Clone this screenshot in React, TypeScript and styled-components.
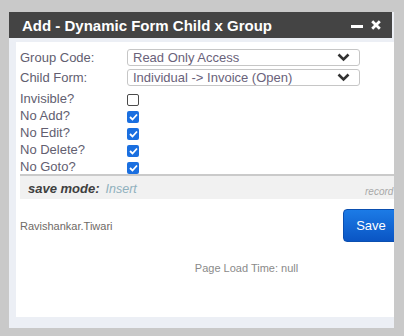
import React from 'react';
import styled, { createGlobalStyle } from 'styled-components';

const GlobalStyle = createGlobalStyle`
    html, body {
        margin:0;
        padding:0;
        background:#c9c9c9;
    }
    body{
        font-family:"Liberation Sans", Arial, sans-serif;
    }
`;

const Page = styled.div`
    width:404px;
    height:336px;
    padding:12px 10px 0 9px;
    box-sizing:border-box;
    overflow:hidden;
`;

const Window = styled.div`
    width:385px;
    height:316px;
    background:#eceff5;
    overflow:hidden;
    display:flex;
    flex-direction:column;
`;

const TitleBar = styled.div`
    height:26px;
    margin-right:2px;
    background:#444444;
    display:flex;
    align-items:center;
    padding:0 11px 0 13px;
    flex-shrink:0;
    h3{
        margin:0;
        flex:1;
        font-size:15px;
        font-weight:bold;
        color:#ffffff;
        white-space:nowrap;
    }
`;

const TitleIcons = styled.div`
    display:flex;
    align-items:center;
    gap:8px;
`;

const Body = styled.div`
    flex:1;
    padding:4px 0 11px 7px;
    display:flex;
`;

const Panel = styled.div`
    width:457px;
    flex-shrink:0;
    background:#ffffff;
    padding:5px 0 0 4px;
    box-sizing:border-box;
    display:flex;
    flex-direction:column;
`;

const SelectRow = styled.div`
    height:20px;
    display:flex;
    align-items:center;
`;

const Label = styled.div`
    width:107px;
    flex-shrink:0;
    font-size:13px;
    color:#625e70;
`;

const FakeSelect = styled.div`
    width:233px;
    height:17px;
    box-sizing:border-box;
    border:1px solid #c6c6c6;
    border-radius:3px;
    display:flex;
    align-items:center;
    justify-content:space-between;
    padding:0 9px 0 5px;
    font-size:13px;
    color:#6a627a;
    white-space:nowrap;
`;

const Checks = styled.div`
    margin-top:3px;
`;

const CheckRow = styled.div`
    height:17px;
    display:flex;
    align-items:center;
`;

const Box = styled.span<{ $on: boolean }>`
    width:12px;
    height:12px;
    margin-top:3px;
    box-sizing:border-box;
    border-radius:2px;
    border:${p => p.$on ? 'none' : '1px solid #4a4a4a'};
    background:${p => p.$on ? '#1a6fe0' : '#ffffff'};
    display:flex;
    align-items:center;
    justify-content:center;
`;

const Separator = styled.div`
    height:2px;
    margin-top:-1px;
    background:#cacaca;
`;

const ModeBand = styled.div`
    height:23px;
    background:#f1f1f1;
    display:grid;
    grid-template-columns:337px auto;
    align-items:center;
    padding-left:8px;
`;

const ModeText = styled.div`
    white-space:nowrap;
    b{
        font-size:13px;
        font-style:italic;
        color:#3f3f3f;
    }
    i{
        margin-left:6px;
        font-size:12.5px;
        color:#8fb0bd;
    }
`;

const RecordText = styled.div`
    font-size:10px;
    font-style:italic;
    color:#a8a8a8;
    padding-top:8px;
    white-space:nowrap;
`;

const FooterRow = styled.div`
    margin-top:10px;
    display:flex;
    align-items:center;
`;

const UserName = styled.div`
    flex:0 0 323px;
    font-size:11px;
    color:#6f6a66;
`;

const Button = styled.button`
    width:56px;
    height:33px;
    border:1px solid #0b4fb0;
    border-radius:4px;
    background:linear-gradient(#1c7be6, #0a55c4);
    color:white;
    font-family:"Liberation Sans", Arial, sans-serif;
    font-size:13px;
    padding:0;
    cursor:pointer;
`;

const LoadTime = styled.div`
    margin-top:20px;
    text-align:center;
    font-size:11px;
    color:#8a8a8a;
`;

function Chevron() {
    return (
        <svg width="13" height="9" viewBox="0 0 13 9">
            <path d="M1.5 1.5 L6.5 6.5 L11.5 1.5" fill="none" stroke="#333" strokeWidth="2.6" />
        </svg>
    );
}

function Check(props: { on: boolean }) {
    return (
        <Box $on={props.on}>
            {props.on &&
                <svg width="9" height="8" viewBox="0 0 9 8">
                    <path d="M1 4 L3.5 6.5 L8 1.5" fill="none" stroke="#fff" strokeWidth="1.8" />
                </svg>}
        </Box>
    );
}

const checks = [
    { label: 'Invisible?', on: false },
    { label: 'No Add?', on: true },
    { label: 'No Edit?', on: true },
    { label: 'No Delete?', on: true },
    { label: 'No Goto?', on: true },
];

function App() {
    return (
        <Page>
            <GlobalStyle />
            <Window>
                <TitleBar>
                    <h3>Add - Dynamic Form Child x Group</h3>
                    <TitleIcons>
                        <svg width="12" height="12" viewBox="0 0 12 12">
                            <rect x="0" y="6" width="12" height="3" fill="#fff" />
                        </svg>
                        <svg width="10" height="10" viewBox="0 0 10 10">
                            <path d="M1.2 1.2 L8.8 8.8 M8.8 1.2 L1.2 8.8" stroke="#fff" strokeWidth="2.8" />
                        </svg>
                    </TitleIcons>
                </TitleBar>
                <Body>
                    <Panel>
                        <SelectRow>
                            <Label>Group Code:</Label>
                            <FakeSelect>Read Only Access<Chevron /></FakeSelect>
                        </SelectRow>
                        <SelectRow>
                            <Label>Child Form:</Label>
                            <FakeSelect>Individual -&gt; Invoice (Open)<Chevron /></FakeSelect>
                        </SelectRow>
                        <Checks>
                            {checks.map(c => (
                                <CheckRow key={c.label}>
                                    <Label>{c.label}</Label>
                                    <Check on={c.on} />
                                </CheckRow>
                            ))}
                        </Checks>
                        <Separator />
                        <ModeBand>
                            <ModeText><b>save mode:</b><i>Insert</i></ModeText>
                            <RecordText>record status</RecordText>
                        </ModeBand>
                        <FooterRow>
                            <UserName>Ravishankar.Tiwari</UserName>
                            <Button>Save</Button>
                        </FooterRow>
                        <LoadTime>Page Load Time: null</LoadTime>
                    </Panel>
                </Body>
            </Window>
        </Page>
    );
}

export default App;
